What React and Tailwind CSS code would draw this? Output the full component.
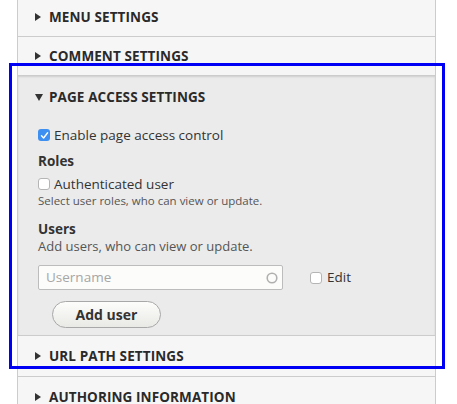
import React from 'react';

const FONT = { fontFamily: '"Open Sans", "DejaVu Sans", sans-serif' };

function Arrow({ open }) {
  return open ? (
    <svg width="8" height="7" viewBox="0 0 8 7" className="shrink-0">
      <polygon points="0,0 8,0 4,7" fill="#333" />
    </svg>
  ) : (
    <svg width="6" height="8" viewBox="0 0 6 8" className="shrink-0">
      <polygon points="0,0 6,4 0,8" fill="#333" />
    </svg>
  );
}

function SectionRow({ title, className = '' }) {
  return (
    <div className={`flex items-center gap-[8px] pl-[17px] border-b border-[#cccccc] ${className}`}>
      <Arrow />
      <span className="text-[13.5px] font-bold uppercase text-[#2a2a2a] tracking-[0.1px]">{title}</span>
    </div>
  );
}

function Checkbox({ checked }) {
  if (checked) {
    return (
      <span className="w-[12px] h-[12px] rounded-[3px] bg-[#3d8ff2] flex items-center justify-center shrink-0">
        <svg width="9" height="9" viewBox="0 0 9 9">
          <path d="M1.5 4.8 L3.6 7 L7.6 1.8" fill="none" stroke="white" strokeWidth="1.4" strokeLinecap="round" strokeLinejoin="round" />
        </svg>
      </span>
    );
  }
  return <span className="w-[12px] h-[12px] rounded-[3px] bg-white border border-[#b5b5b5] shrink-0" />;
}

export default function App() {
  return (
    <div className="relative w-full h-[404px] overflow-hidden bg-white" style={FONT}>
      <div className="ml-[17px] w-[419px] -mt-[2px] border-x border-[#cccccc] bg-[#f6f6f6]">
        <SectionRow title="Menu settings" className="h-[39px]" />
        <SectionRow title="Comment settings" className="h-[39px]" />

        <div className="bg-[#ebebeb] border-b border-[#cccccc] shadow-[inset_0_1px_2px_rgba(0,0,0,0.12)] h-[260px]">
          <div className="flex items-center gap-[6px] pl-[17px] h-[42px]">
            <Arrow open />
            <span className="text-[13.5px] font-bold uppercase text-[#2a2a2a] tracking-[0.1px]">Page access settings</span>
          </div>

          <div className="pl-[20px] pt-[9px] text-[13.5px] text-[#333]">
            <label className="flex items-center gap-[4px] h-[16px]">
              <Checkbox checked />
              <span>Enable page access control</span>
            </label>

            <div className="mt-[10px] font-bold leading-[16px]">Roles</div>
            <label className="mt-[7px] flex items-center gap-[4px] h-[16px]">
              <Checkbox />
              <span>Authenticated user</span>
            </label>
            <div className="mt-[1px] text-[11.5px] text-[#555] leading-[16px]">Select user roles, who can view or update.</div>

            <div className="mt-[12px] font-bold leading-[16px]">Users</div>
            <div className="text-[13px] text-[#555] leading-[18px]">Add users, who can view or update.</div>

            <div className="mt-[10px] flex items-center">
              <div className="w-[245px] h-[25px] rounded-[2px] border border-[#bcbcbc] bg-[#fcfcfa] flex items-center justify-between pl-[7px] pr-[4px]">
                <span className="text-[#a6a6a6]">Username</span>
                <svg width="12" height="12" viewBox="0 0 12 12">
                  <circle cx="6" cy="6" r="4.8" fill="none" stroke="#b0b0b0" strokeWidth="1.6" />
                </svg>
              </div>
              <label className="ml-[27px] flex items-center gap-[5px]">
                <Checkbox />
                <span>Edit</span>
              </label>
            </div>

            <button className="mt-[11px] ml-[14px] w-[109px] h-[27px] rounded-full border border-[#a8a8a8] bg-gradient-to-b from-[#fdfdfb] to-[#e9e9e6] text-[14px] font-bold text-[#333] flex items-center justify-center">
              Add user
            </button>
          </div>
        </div>

        <SectionRow title="URL path settings" className="h-[41px]" />
        <SectionRow title="Authoring information" className="h-[41px]" />
      </div>

      <div className="absolute left-[9px] top-[63px] w-[436px] h-[306px] border-[3px] border-[#0000f5] pointer-events-none" />
    </div>
  );
}
